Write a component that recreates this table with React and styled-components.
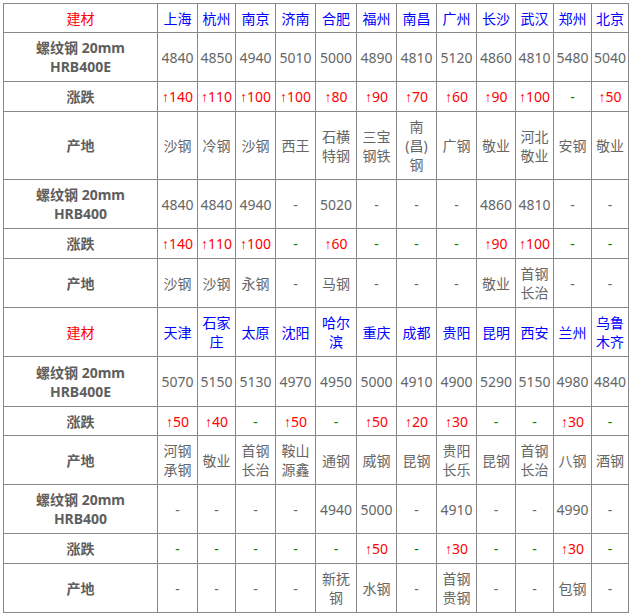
import React from "react";
import styled, { createGlobalStyle } from "styled-components";

const GlobalStyle = createGlobalStyle`
  html, body { margin: 0; padding: 0; background: #fff; }
  body { font-family: "Noto Sans", "Noto Sans CJK SC", sans-serif; }
`;

const Page = styled.div`
  padding: 3px 0 0 3px;
`;

const Table = styled.table`
  width: 626px;
  table-layout: fixed;
  border-collapse: collapse;
  border: 1px solid #333;
  font-size: 14px;
  line-height: 19px;
  color: #666;
`;

const Row = styled.tr`
  height: ${(p) => p.$h}px;
`;

const Cell = styled.td`
  border: 1px solid #888;
  padding: 0 1px;
  text-align: center;
  vertical-align: middle;
  word-break: keep-all;
`;

const HeadCell = styled(Cell)`
  color: ${(p) => (p.$label ? "#ff0000" : "#0000ff")};
`;

const LabelCell = styled(Cell)`
  font-weight: 700;
  color: #5e5e5e;
`;

const DataCell = styled(Cell)`
  color: ${(p) => (p.$tone === "up" ? "#ff0000" : p.$tone === "flat" ? "#008000" : "#666")};
`;

const Arrow = styled.span`
  font-family: "Liberation Sans", sans-serif;
  line-height: 0;
`;

const widths = [154, 40, 38, 40, 40, 41, 40, 40, 40, 39, 38, 38, 37];

const blocks = [
  {
    cities: ["上海", "杭州", "南京", "济南", "合肥", "福州", "南昌", "广州", "长沙", "武汉", "郑州", "北京"],
    head: 29,
    rows: [
      { grade: "HRB400E", h: [49, 30, 68],
        price: ["4840", "4850", "4940", "5010", "5000", "4890", "4810", "5120", "4860", "4810", "5480", "5040"],
        change: ["140", "110", "100", "100", "80", "90", "70", "60", "90", "100", "-", "50"],
        origin: ["沙钢", "冷钢", "沙钢", "西王", "石横|特钢", "三宝|钢铁", "南|(昌)|钢", "广钢", "敬业", "河北|敬业", "安钢", "敬业"] },
      { grade: "HRB400", h: [49, 30, 49],
        price: ["4840", "4840", "4940", "-", "5020", "-", "-", "-", "4860", "4810", "-", "-"],
        change: ["140", "110", "100", "-", "60", "-", "-", "-", "90", "100", "-", "-"],
        origin: ["沙钢", "沙钢", "永钢", "-", "马钢", "-", "-", "-", "敬业", "首钢|长治", "-", "-"] },
    ],
  },
  {
    cities: ["天津", "石家|庄", "太原", "沈阳", "哈尔|滨", "重庆", "成都", "贵阳", "昆明", "西安", "兰州", "乌鲁|木齐"],
    head: 49,
    rows: [
      { grade: "HRB400E", h: [50, 29, 49],
        price: ["5070", "5150", "5130", "4970", "4950", "5000", "4910", "4900", "5290", "5150", "4980", "4840"],
        change: ["50", "40", "-", "50", "-", "50", "20", "30", "-", "-", "30", "-"],
        origin: ["河钢|承钢", "敬业", "首钢|长治", "鞍山|源鑫", "通钢", "威钢", "昆钢", "贵阳|长乐", "昆钢", "首钢|长治", "八钢", "酒钢"] },
      { grade: "HRB400", h: [49, 30, 49],
        price: ["-", "-", "-", "-", "4940", "5000", "-", "4910", "-", "-", "4990", "-"],
        change: ["-", "-", "-", "-", "-", "50", "-", "30", "-", "-", "30", "-"],
        origin: ["-", "-", "-", "-", "新抚|钢", "水钢", "-", "首钢|贵钢", "-", "-", "包钢", "-"] },
    ],
  },
];

const Lines = ({ text }) => {
  const parts = text.split("|");
  return parts.map((t, i) => (
    <React.Fragment key={i}>
      {i > 0 && <br />}
      {t}
    </React.Fragment>
  ));
};

export default function App() {
  return (
    <Page>
      <GlobalStyle />
      <Table>
        <colgroup>
          {widths.map((w, i) => (
            <col key={i} style={{ width: w }} />
          ))}
        </colgroup>
        <tbody>
          {blocks.map((b, bi) => (
            <React.Fragment key={bi}>
              <Row $h={b.head}>
                <HeadCell $label>建材</HeadCell>
                {b.cities.map((c, i) => (
                  <HeadCell key={i}>
                    <Lines text={c} />
                  </HeadCell>
                ))}
              </Row>
              {b.rows.map((r, ri) => (
                <React.Fragment key={ri}>
                  <Row $h={r.h[0]}>
                    <LabelCell>
                      螺纹钢 20mm
                      <br />
                      {r.grade}
                    </LabelCell>
                    {r.price.map((v, i) => (
                      <DataCell key={i}>{v}</DataCell>
                    ))}
                  </Row>
                  <Row $h={r.h[1]}>
                    <LabelCell>涨跌</LabelCell>
                    {r.change.map((v, i) =>
                      v === "-" ? (
                        <DataCell key={i} $tone="flat">-</DataCell>
                      ) : (
                        <DataCell key={i} $tone="up">
                          <Arrow>↑</Arrow>
                          {v}
                        </DataCell>
                      )
                    )}
                  </Row>
                  <Row $h={r.h[2]}>
                    <LabelCell>产地</LabelCell>
                    {r.origin.map((v, i) => (
                      <DataCell key={i}>
                        <Lines text={v} />
                      </DataCell>
                    ))}
                  </Row>
                </React.Fragment>
              ))}
            </React.Fragment>
          ))}
        </tbody>
      </Table>
    </Page>
  );
}
